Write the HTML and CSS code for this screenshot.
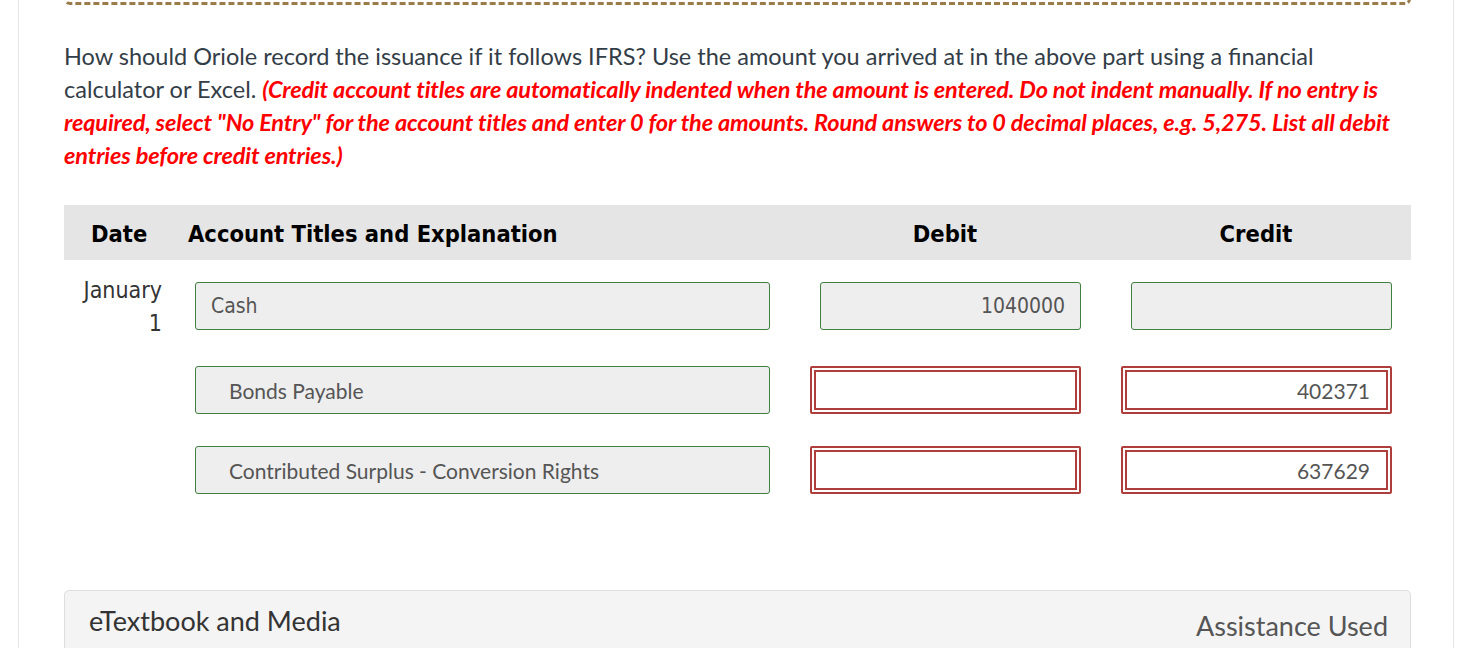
FILE: index.html
```html
<!DOCTYPE html>
<html lang="en">
<head>
<meta charset="utf-8">
<title>Journal entry</title>
<link rel="stylesheet" href="styles.css">
</head>
<body>
<div class="page">
  <div class="prev-box"></div>
  <p class="question">How should Oriole record the issuance if it follows IFRS? Use the amount you arrived at in the above part using a financial calculator or Excel. <span class="note">(Credit account titles are automatically indented when the amount is entered. Do not indent manually. If no entry is required, select "No Entry" for the account titles and enter 0 for the amounts. Round answers to 0 decimal places, e.g. 5,275. List all debit entries before credit entries.)</span></p>

  <div class="journal">
    <div class="jhead">
      <div class="hc c-date">Date</div>
      <div class="hc c-acct">Account Titles and Explanation</div>
      <div class="hc c-debit">Debit</div>
      <div class="hc c-credit">Credit</div>
    </div>

    <div class="jrow">
      <div class="c-date date-cell">January<br>1</div>
      <div class="c-acct cell"><div class="field acct tahoma">Cash</div></div>
      <div class="c-debit cell"><div class="field num tahoma">1040000</div></div>
      <div class="c-credit cell"><div class="field num"></div></div>
    </div>

    <div class="jrow">
      <div class="c-date date-cell"></div>
      <div class="c-acct cell"><div class="field acct indent">Bonds Payable</div></div>
      <div class="c-debit cell"><div class="field num wrong"></div></div>
      <div class="c-credit cell"><div class="field num wrong">402371</div></div>
    </div>

    <div class="jrow">
      <div class="c-date date-cell"></div>
      <div class="c-acct cell"><div class="field acct indent">Contributed Surplus - Conversion Rights</div></div>
      <div class="c-debit cell"><div class="field num wrong"></div></div>
      <div class="c-credit cell"><div class="field num wrong">637629</div></div>
    </div>
  </div>

  <div class="media">
    <span class="media-title">eTextbook and Media</span>
    <span class="assist">Assistance Used</span>
  </div>
</div>
</body>
</html>
```

FILE: styles.css
```css
html, body {
  margin: 0;
  padding: 0;
  background: #ffffff;
  overflow: hidden;
}
body {
  font-family: Lato, "Liberation Sans", sans-serif;
  color: #333d47;
}
.page {
  margin-left: 18px;
  width: 1347px;
  height: 700px;
  border-left: 1px solid #e6e6e6;
  border-right: 1px solid #e6e6e6;
  padding: 0 42px 0 45px;
}
.prev-box {
  height: 40px;
  margin-top: -35px;
  box-sizing: border-box;
  border: 3px dashed #9b7b4a;
  border-radius: 6px;
}
.question {
  margin: 35px 0 0 0;
  font-size: 23.5px;
  line-height: 33px;
  color: #333d47;
}
.note {
  color: #ff0000;
  font-weight: bold;
  font-style: italic;
  letter-spacing: -0.14px;
}
.journal {
  margin-top: 33px;
}
.jhead, .jrow {
  display: grid;
  grid-template-columns: 116px 615px 311px 305px;
}
.jhead {
  background: #e5e5e5;
  height: 55px;
  align-items: center;
  margin-bottom: 6px;
}
.hc {
  font-family: "DejaVu Sans Condensed", "DejaVu Sans", sans-serif;
  font-weight: bold;
  font-size: 23.5px;
  color: #000;
  padding-top: 2px;
}
.jhead .c-date { padding-left: 27px; }
.jhead .c-acct { padding-left: 8px; }
.jhead .c-debit { text-align: center; padding-right: 11px; }
.jhead .c-credit { text-align: center; padding-right: 5px; }
.date-cell {
  font-family: "DejaVu Sans Condensed", "DejaVu Sans", sans-serif;
  font-size: 23px;
  line-height: 33px;
  color: #333;
  text-align: right;
  padding: 8px 18px 10px 0;
}
.cell {
  padding: 16px 0;
  display: flex;
}
.c-acct.cell { padding-left: 15px; padding-right: 25px; }
.c-debit.cell { justify-content: flex-end; padding-right: 25px; }
.c-credit.cell { justify-content: flex-end; padding-right: 19px; }
.field {
  box-sizing: border-box;
  height: 48px;
  background: #eeeeee;
  border: 1px solid #3f7f3f;
  border-radius: 3px;
  font-size: 21px;
  color: #555;
  display: flex;
  align-items: center;
}
.field.acct {
  width: 575px;
  padding-left: 15px;
}
.field.indent { padding-left: 33px; }
.field.num {
  width: 261px;
  justify-content: flex-end;
  padding-right: 15px;
}
.tahoma {
  font-family: "DejaVu Sans Condensed", "DejaVu Sans", sans-serif;
  font-size: 21px;
}
.field.wrong {
  width: 271px;
  background: #ffffff;
  border: 6px double #ae3e3b;
  border-radius: 2px;
  padding-right: 16px;
}
.media {
  margin-top: 80px;
  height: 70px;
  background: #f4f4f4;
  border: 1px solid #dedede;
  border-radius: 5px;
  display: flex;
  justify-content: space-between;
  align-items: flex-start;
  padding: 13px 22px 0 24px;
  box-sizing: border-box;
}
.media-title {
  font-size: 27px;
  color: #333;
}
.assist {
  font-size: 27px;
  color: #555;
  margin-top: 5px;
}
```
